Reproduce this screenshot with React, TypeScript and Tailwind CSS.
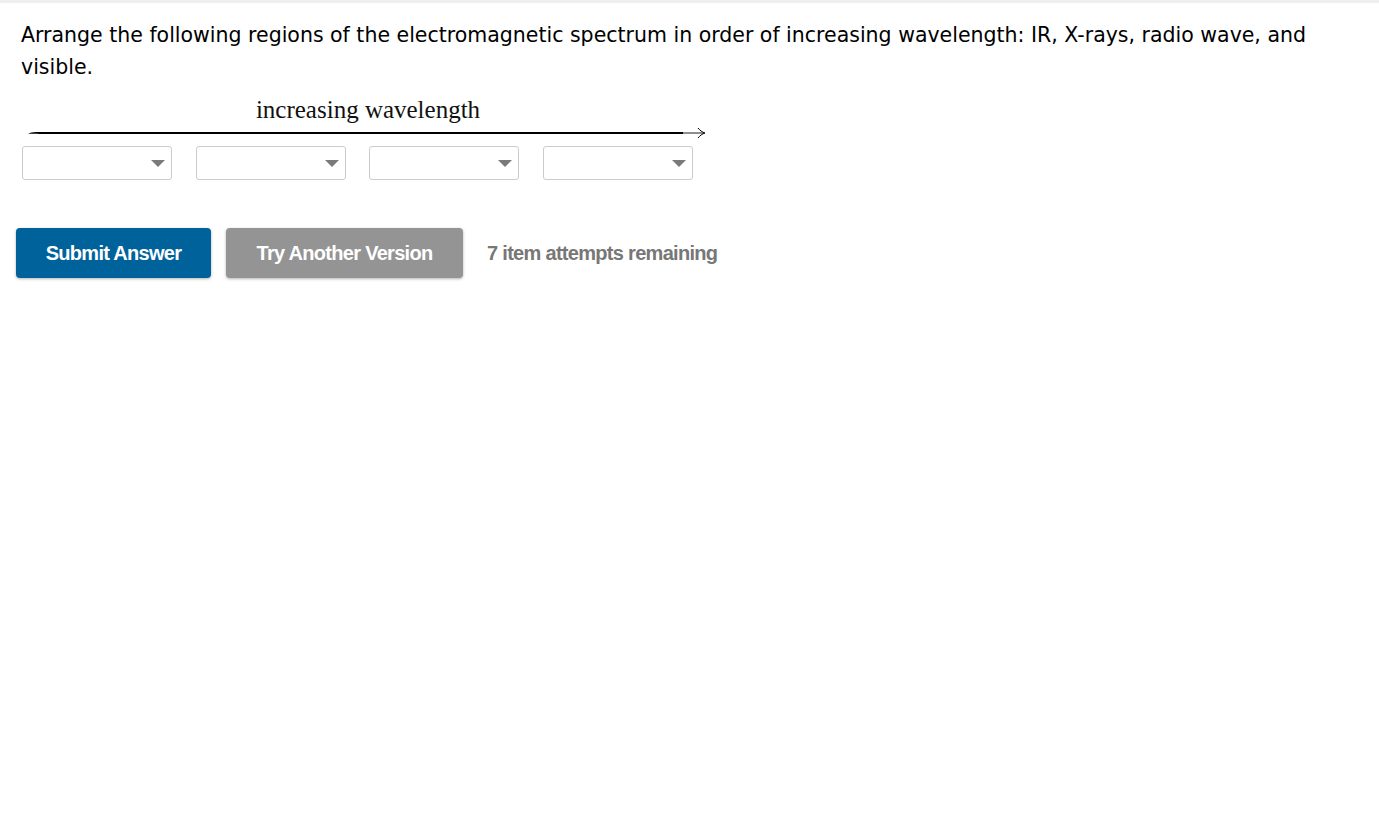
import React from "react";

const slots = [0, 1, 2, 3];

function Caret() {
  return (
    <svg width="14" height="7" viewBox="0 0 14 7" className="shrink-0">
      <path d="M0 0 L14 0 L7 7 Z" fill="#7a7a7a" />
    </svg>
  );
}

function Arrow() {
  return (
    <svg width="680" height="12" viewBox="0 0 680 12" className="block">
      <path d="M0 6.6 C 3 5.2, 7 5, 12 5 L655 5 L655 7 L12 7 C 7 7, 3 6.8, 0 6.6 Z" fill="#000" />
      <path d="M655 6 L675 6" stroke="#444" strokeWidth="1.2" />
      <path d="M670 1 C 672 3.5, 674 5, 677 6 C 674 7, 672 8.5, 670 11" stroke="#000" strokeWidth="1" fill="none" />
    </svg>
  );
}

export default function App() {
  return (
    <div className="min-h-screen bg-white">
      <div className="h-[3px] bg-[#eeeeee]" />
      <div className="px-[21px] pt-[16px]">
        <p className="text-[20.5px] leading-[32px] text-black font-['DejaVu_Sans',_Verdana,_sans-serif]">
          Arrange the following regions of the electromagnetic spectrum in order of increasing wavelength: IR, X-rays, radio wave, and visible.
        </p>

        <div className="mt-[13px] w-[680px] ml-[7px]">
          <div className="text-center text-[25px] leading-[28px] text-[#111] font-['Liberation_Serif',_'DejaVu_Serif',_serif]">
            increasing wavelength
          </div>
          <div className="mt-[3px]">
            <Arrow />
          </div>
        </div>

        <div className="mt-[7px] flex gap-[23.5px] ml-px">
          {slots.map((i) => (
            <div
              key={i}
              className="w-[150px] h-[34px] border border-[#cccccc] rounded-[3px] bg-white flex items-center justify-end pr-[6px]"
            >
              <Caret />
            </div>
          ))}
        </div>
      </div>

      <div className="flex items-center gap-[15px] px-[16px] mt-[48px] font-['Liberation_Sans',_Arial,_sans-serif]">
        <button className="w-[195px] h-[50px] rounded-[4px] bg-[#00629b] text-white text-[20px] font-bold tracking-[-0.7px] shadow-[0_1px_3px_rgba(0,0,0,0.3)]">
          Submit Answer
        </button>
        <button className="w-[237px] h-[50px] rounded-[4px] bg-[#949494] text-white text-[20px] font-bold tracking-[-0.7px] shadow-[0_1px_3px_rgba(0,0,0,0.3)]">
          Try Another Version
        </button>
        <span className="ml-[9px] text-[20px] font-bold text-[#777777] tracking-[-0.7px]">
          7 item attempts remaining
        </span>
      </div>
    </div>
  );
}
